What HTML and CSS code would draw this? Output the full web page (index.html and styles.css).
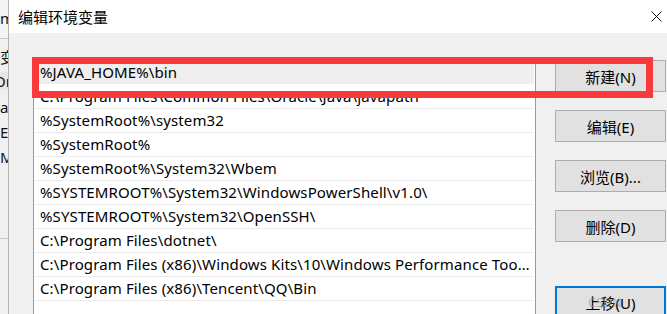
FILE: index.html
```html
<!DOCTYPE html>
<html lang="zh-CN">
<head>
<meta charset="utf-8">
<title>编辑环境变量</title>
<link rel="stylesheet" href="styles.css">
</head>
<body>
<div class="screen">
  <aside class="bgwin">
    <div class="bg-top"><span class="frag">m</span></div>
    <div class="bg-rows">
      <span class="frag">变</span>
      <span class="frag sel shift">Or</span>
      <span class="frag">a</span>
      <span class="frag">E</span>
      <span class="frag">M</span>
    </div>
    <div class="bg-bottom"></div>
  </aside>
  <section class="dialog">
    <header class="titlebar">
      <span class="title">编辑环境变量</span>
      <svg class="close" width="11" height="11" viewBox="0 0 11 11"><path d="M0.5 0.5 L10.5 10.5 M10.5 0.5 L0.5 10.5" stroke="#111" stroke-width="1" fill="none"/></svg>
    </header>
    <div class="content">
      <div class="list">
        <div class="row selected">%JAVA_HOME%\bin</div>
        <div class="row">C:\Program Files\Common Files\Oracle\Java\javapath</div>
        <div class="row">%SystemRoot%\system32</div>
        <div class="row">%SystemRoot%</div>
        <div class="row">%SystemRoot%\System32\Wbem</div>
        <div class="row">%SYSTEMROOT%\System32\WindowsPowerShell\v1.0\</div>
        <div class="row">%SYSTEMROOT%\System32\OpenSSH\</div>
        <div class="row">C:\Program Files\dotnet\</div>
        <div class="row">C:\Program Files (x86)\Windows Kits\10\Windows Performance Toolkit\</div>
        <div class="row">C:\Program Files (x86)\Tencent\QQ\Bin</div>
      </div>
      <div class="buttons">
        <button class="btn">新建(N)</button>
        <button class="btn">编辑(E)</button>
        <button class="btn">浏览(B)...</button>
        <button class="btn">删除(D)</button>
        <button class="btn focused">上移(U)</button>
      </div>
    </div>
  </section>
  <div class="highlight"></div>
  <div class="watermark">CSDN @YSRM</div>
</div>
</body>
</html>
```
FILE: styles.css
```css
* { box-sizing: border-box; }
html, body { margin: 0; padding: 0; }
body {
  width: 667px;
  height: 314px;
  overflow: hidden;
  font-family: "Noto Sans", "Noto Sans CJK SC", sans-serif;
  background: #f0f0f0;
}
.screen {
  position: relative;
  display: flex;
  width: 667px;
  height: 314px;
  overflow: hidden;
}
.bgwin {
  width: 9px;
  flex: none;
  border-right: 1px solid #b4b4b4;
  background: #f0f0f0;
  display: flex;
  flex-direction: column;
  overflow: hidden;
  font-size: 15px;
  color: #111;
}
.bg-top {
  height: 39px;
  border-bottom: 1px solid #c8c8c8;
  background: #f5f5f5;
  padding-top: 8px;
}
.bg-rows {
  display: flex;
  flex-direction: column;
  padding-top: 8px;
  height: 200px;
  border-bottom: 1px solid #c8c8c8;
}
.frag {
  display: block;
  height: 25px;
  line-height: 20px;
  white-space: nowrap;
}
.frag.sel { background: #e6e6e6; height: 18px; margin-bottom: 7px; line-height: 18px; }
.frag.shift { margin-left: -6px; }
.dialog {
  flex: 1;
  display: flex;
  flex-direction: column;
}
.titlebar {
  height: 33px;
  flex: none;
  background: #ffffff;
  display: flex;
  align-items: center;
  padding-left: 9px;
}
.title {
  font-size: 15px;
  color: #000;
}
.close {
  margin-left: auto;
  margin-right: 5px;
}
.content {
  flex: 1;
  background: #f0f0f0;
  display: flex;
  align-items: flex-start;
  padding: 27px 0 0 24px;
}
.list {
  width: 503px;
  height: 300px;
  flex: none;
  background: #fff;
  border: 1px solid #9a9a9a;
  border-top-color: #7a7a7a;
}
.row {
  height: 24px;
  margin-right: 1px;
  border-bottom: 1px solid #ececec;
  padding: 0 3px 0 6px;
  font-size: 15px;
  letter-spacing: 0.12px;
  line-height: 23px;
  color: #000;
  white-space: nowrap;
  overflow: hidden;
  text-overflow: ellipsis;
}
.row.selected {
  background: #efefef;
  border-bottom-color: #fff;
}
.buttons {
  margin-left: 19px;
  width: 111px;
  flex: none;
  display: flex;
  flex-direction: column;
  gap: 18px;
}
.btn {
  height: 32px;
  background: #e1e1e1;
  border: 1px solid #adadad;
  font-family: inherit;
  font-size: 15px;
  color: #000;
  padding: 0;
}
.btn.focused {
  margin-top: 26px;
  border: 2px solid #0078d7;
}
.highlight {
  position: absolute;
  left: 32px;
  top: 57px;
  width: 621px;
  height: 41px;
  border: 7px solid #f83a3c;
}
.watermark {
  position: absolute;
  left: 588px;
  top: 293px;
  font-size: 13px;
  color: rgba(150, 150, 150, 0.6);
  letter-spacing: -0.3px;
}
```
